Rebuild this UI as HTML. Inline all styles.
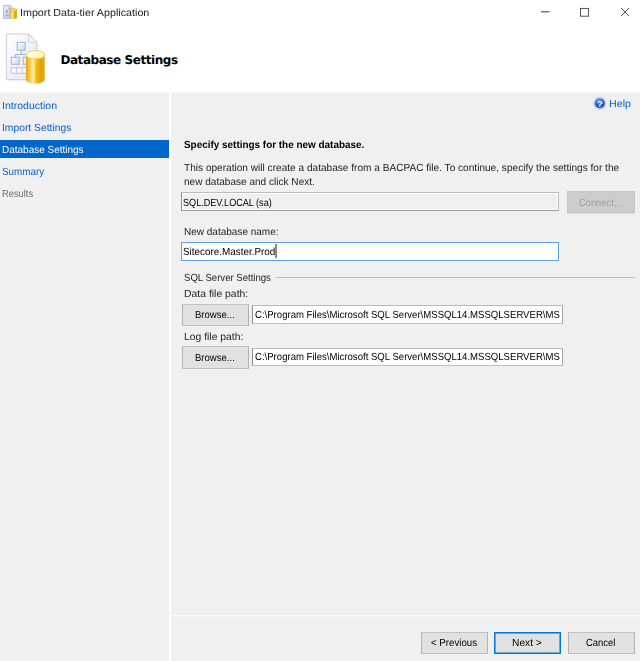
<!DOCTYPE html>
<html><head><meta charset="utf-8">
<title>Import Data-tier Application</title>
<style>
html,body{margin:0;padding:0;}
body{width:640px;height:661px;background:#fff;font-family:"Liberation Sans",sans-serif;font-size:11px;color:#000;position:relative;overflow:hidden;}
.abs{position:absolute;box-sizing:border-box;}
.tx{position:absolute;white-space:nowrap;transform-origin:0 0;text-rendering:geometricPrecision;}
#left{left:0;top:92px;width:169px;height:569px;background:#f0f0f0;border-top:1px solid #f8f8f8;}
#right{left:171px;top:92px;width:469px;height:569px;background:#f0f0f0;border-top:1px solid #f8f8f8;}
#sel{left:0;top:140px;width:169px;height:18px;background:#0066cc;}
#hsep{left:171px;top:615px;width:469px;height:2px;background:linear-gradient(#fbfbfb 50%,#f5f5f5 50%);}
.inp{background:#fff;border:1px solid;border-color:#bababa #a6a6a6 #c0c0c0 #8e8e8e;}
.ro{background:#f0f0f0;border:1px solid;border-color:#bdbdbd #c0c0c0 #9f9f9f #8c8c8c;box-shadow:inset 0 0 0 1px #fff;}
.btn{background:#e1e1e1;border:1px solid;border-color:#bebebe #b2b2b2;}
#gline{left:276px;top:277px;width:359px;height:1px;background:#bdbdbd;}
</style></head><body>
<div class="abs" id="left"></div>
<div class="abs" id="right"></div>
<div class="abs" id="hsep"></div>
<div class="abs" id="sel"></div>

<!-- window controls -->
<svg class="abs" style="left:520px;top:0" width="120" height="30" viewBox="0 0 120 30">
 <path d="M21 11.8H29.6" stroke="#3a3a3a" stroke-width="1" fill="none"/>
 <rect x="60.5" y="8.4" width="8.1" height="7.8" stroke="#444" stroke-width="0.9" fill="none"/>
 <path d="M101 8L109 16.2M109 8L101 16.2" stroke="#3a3a3a" stroke-width="0.9" fill="none"/>
</svg>

<!-- fields -->
<div class="abs ro" style="left:181px;top:192px;width:378px;height:19px"></div>
<div class="abs" style="left:567px;top:191px;width:68px;height:22px;background:#cccccc;border:1px solid #c6c6c6;box-shadow:0 1px 0 #dfdfdf"></div>
<div class="abs inp" style="left:181px;top:242px;width:378px;height:19px;border-color:#5ba3e1"></div>
<div class="abs" style="left:275px;top:244px;width:2px;height:14px;background:#8a8a8a"></div>
<div class="abs" id="gline"></div>
<div class="abs btn" style="left:182px;top:304px;width:67px;height:22px"></div>
<div class="abs inp" style="left:252px;top:305px;width:311px;height:19px"></div>
<div class="abs btn" style="left:182px;top:346px;width:67px;height:23px"></div>
<div class="abs inp" style="left:252px;top:348px;width:311px;height:18px"></div>

<div class="abs btn" style="left:421px;top:632px;width:67px;height:22px"></div>
<div class="abs btn" style="left:494px;top:632px;width:67px;height:22px;border:1px solid #0078d7;box-shadow:inset 0 0 0 1px rgba(0,120,215,.55)"></div>
<div class="abs btn" style="left:568px;top:632px;width:67px;height:22px"></div>

<!-- big wizard icon -->
<svg class="abs" style="left:0;top:26px" width="60" height="66" viewBox="0 26 60 66">
 <defs>
  <linearGradient id="docg" x1="0" y1="0" x2="1" y2="1"><stop offset="0" stop-color="#ffffff"/><stop offset="1" stop-color="#e6e6e6"/></linearGradient>
  <linearGradient id="boxg" x1="0" y1="0" x2="1" y2="1"><stop offset="0" stop-color="#ffffff"/><stop offset="1" stop-color="#c9d6f2"/></linearGradient>
  <linearGradient id="cylg" x1="0" y1="0" x2="1" y2="0">
   <stop offset="0" stop-color="#e9a616"/><stop offset="0.18" stop-color="#f2c441"/><stop offset="0.38" stop-color="#fff2a6"/><stop offset="0.56" stop-color="#f1b91c"/><stop offset="0.85" stop-color="#e0a000"/><stop offset="1" stop-color="#ebb434"/>
  </linearGradient>
  <linearGradient id="topg" x1="0" y1="0" x2="1" y2="1"><stop offset="0" stop-color="#fffef0"/><stop offset="1" stop-color="#fff3b4"/></linearGradient>
  <filter id="sh" x="-20%" y="-20%" width="140%" height="140%"><feGaussianBlur stdDeviation="0.8"/></filter>
 </defs>
 <path d="M7 34.5H28.5L36.8 43V80H7Z" fill="#000" opacity="0.18" filter="url(#sh)"/>
 <path d="M6.5 34H28.5L36.5 42.3V79.5H6.5Z" fill="url(#docg)" stroke="#d3d3d3" stroke-width="1"/>
 <path d="M28.5 34V42.3H36.5Z" fill="#f4f4f4" stroke="#cfcfcf" stroke-width="0.8"/>
 <g stroke="#a0b2da" stroke-width="1" fill="url(#boxg)">
  <path d="M21.3 50.5V54.5M15.3 57V54.5H27.3V57" fill="none" stroke="#9db3de"/>
  <rect x="17.2" y="42.3" width="8" height="8"/>
  <rect x="11.2" y="57.3" width="8" height="7"/>
  <rect x="23.2" y="57.3" width="8" height="7"/>
  <rect x="11.2" y="67.8" width="16.5" height="5.5" stroke="#b9c5e0" fill="#fbfcff"/>
  <path d="M16.7 67.8V73.3M22.2 67.8V73.3" stroke="#b9c5e0" fill="none"/>
 </g>
 <ellipse cx="35.5" cy="80.3" rx="9.6" ry="3.6" fill="#000" opacity="0.15" filter="url(#sh)"/>
 <path d="M25.9 54.8V79.2A9.45 4.1 0 0 0 44.8 79.2V54.8Z" fill="url(#cylg)"/>
 <ellipse cx="35.35" cy="54.8" rx="9.45" ry="4.2" fill="url(#topg)" stroke="#f0c54a" stroke-width="0.8"/>
</svg>

<!-- title icon -->
<svg class="abs" style="left:0;top:0" width="22" height="24" viewBox="0 0 22 24">
 <defs>
  <linearGradient id="tdoc" x1="0" y1="0" x2="1" y2="1"><stop offset="0" stop-color="#eef1f8"/><stop offset="1" stop-color="#b7c3dc"/></linearGradient>
 </defs>
 <path d="M3.5 5.5H10.8L13.8 8.5V18.5H3.5Z" fill="url(#tdoc)" stroke="#b3bfd8" stroke-width="1"/>
 <path d="M10.8 5.5V8.5H13.8" fill="#e9edf6" stroke="#b3bfd8" stroke-width="0.7"/>
 <path d="M5.6 10h2.4v2.6h-2.4zM8.6 7.4h2v2h-2zM5.4 14.4h3.4v1.8h-3.4z" fill="#8fa3c9" opacity="0.8"/>
 <path d="M9.7 10V17.2A3.7 1.5 0 0 0 17.1 17.2V10Z" fill="url(#cylg)"/>
 <ellipse cx="13.4" cy="10" rx="3.7" ry="1.4" fill="#f5d364" stroke="#e9b534" stroke-width="0.5"/>
</svg>

<!-- help icon -->
<svg class="abs" style="left:590px;top:94px" width="20" height="20" viewBox="590 94 20 20">
 <defs>
  <radialGradient id="hg" cx="0.4" cy="0.3" r="0.75"><stop offset="0" stop-color="#6aa2ff"/><stop offset="0.55" stop-color="#1f5fe0"/><stop offset="1" stop-color="#0b3aa8"/></radialGradient>
 </defs>
 <circle cx="599.8" cy="103.3" r="6.4" fill="#b4c1e2"/>
 <circle cx="599.8" cy="103.3" r="5.6" fill="#d6def2"/>
 <circle cx="599.8" cy="103.3" r="4.9" fill="url(#hg)"/>
 <text x="599.9" y="106.7" text-anchor="middle" font-family="Liberation Sans, sans-serif" font-weight="bold" font-size="9.5" fill="#fff">?</text>
</svg>

<div class="tx" id="title" style="left:20.10px;top:6px;font:normal 10.3px/16px 'Liberation Sans',sans-serif;color:#1a1a1a;transform:scaleX(1.0413)">Import Data-tier Application</div>
<div class="tx" id="hdr" style="left:60.40px;top:52px;font:bold 12px/16px 'DejaVu Sans',sans-serif;color:#000;letter-spacing:-0.434px">Database Settings</div>
<div class="tx" id="n1" style="left:2.40px;top:99px;font:normal 10.3px/16px 'Liberation Sans',sans-serif;color:#075fca;transform:scaleX(1.0225)">Introduction</div>
<div class="tx" id="n2" style="left:2.40px;top:121px;font:normal 10.3px/16px 'Liberation Sans',sans-serif;color:#075fca;transform:scaleX(1.0015)">Import Settings</div>
<div class="tx" id="n3" style="left:2.40px;top:143px;font:normal 10.3px/16px 'Liberation Sans',sans-serif;color:#fff;transform:scaleX(0.9691)">Database Settings</div>
<div class="tx" id="n4" style="left:2.40px;top:165px;font:normal 10.3px/16px 'Liberation Sans',sans-serif;color:#075fca;transform:scaleX(0.9576)">Summary</div>
<div class="tx" id="n5" style="left:2.40px;top:187px;font:normal 10.3px/16px 'Liberation Sans',sans-serif;color:#6d6d6d;transform:scaleX(0.9068)">Results</div>
<div class="tx" id="help" style="left:609.30px;top:97px;font:normal 10.3px/16px 'Liberation Sans',sans-serif;color:#075fca;transform:scaleX(1.0396)">Help</div>
<div class="tx" id="spec" style="left:184.00px;top:138px;font:bold 10.3px/16px 'Liberation Sans',sans-serif;color:#000;transform:scaleX(0.9634)">Specify settings for the new database.</div>
<div class="tx" id="p1" style="left:184.40px;top:161px;font:normal 10.3px/16px 'Liberation Sans',sans-serif;color:#1e1e1e;transform:scaleX(0.9806)">This operation will create a database from a BACPAC file. To continue, specify the settings for the</div>
<div class="tx" id="p2" style="left:184.40px;top:175px;font:normal 10.3px/16px 'Liberation Sans',sans-serif;color:#1e1e1e;transform:scaleX(0.9769)">new database and click Next.</div>
<div class="tx" id="srv" style="left:183.40px;top:196px;font:normal 10.3px/16px 'Liberation Sans',sans-serif;color:#000;transform:scaleX(0.8827)">SQL.DEV.LOCAL (sa)</div>
<div class="tx" id="conn" style="left:579.00px;top:196px;font:normal 10.3px/16px 'Liberation Sans',sans-serif;color:#a0a0a0;transform:scaleX(0.9062)">Connect...</div>
<div class="tx" id="ndn" style="left:184.40px;top:225px;font:normal 10.3px/16px 'Liberation Sans',sans-serif;color:#1e1e1e;transform:scaleX(0.9715)">New database name:</div>
<div class="tx" id="dbn" style="left:183.40px;top:245px;font:normal 10.3px/16px 'Liberation Sans',sans-serif;color:#000;transform:scaleX(0.9604)">Sitecore.Master.Prod</div>
<div class="tx" id="sss" style="left:184.40px;top:271px;font:normal 10.3px/16px 'Liberation Sans',sans-serif;color:#1e1e1e;transform:scaleX(0.9295)">SQL Server Settings</div>
<div class="tx" id="dfp" style="left:184.40px;top:287px;font:normal 10.3px/16px 'Liberation Sans',sans-serif;color:#1e1e1e;transform:scaleX(1.0108)">Data file path:</div>
<div class="tx" id="b1" style="left:195.10px;top:308px;font:normal 10.3px/16px 'Liberation Sans',sans-serif;color:#000;transform:scaleX(0.9273)">Browse...</div>
<div class="tx" id="path1" style="left:254.70px;top:308px;font:normal 10.3px/16px 'Liberation Sans',sans-serif;color:#000;transform:scaleX(0.9297)">C:\Program Files\Microsoft SQL Server\MSSQL14.MSSQLSERVER\MS</div>
<div class="tx" id="lfp" style="left:184.40px;top:330px;font:normal 10.3px/16px 'Liberation Sans',sans-serif;color:#1e1e1e;transform:scaleX(1.0068)">Log file path:</div>
<div class="tx" id="b2" style="left:195.10px;top:351px;font:normal 10.3px/16px 'Liberation Sans',sans-serif;color:#000;transform:scaleX(0.9273)">Browse...</div>
<div class="tx" id="path2" style="left:254.70px;top:350px;font:normal 10.3px/16px 'Liberation Sans',sans-serif;color:#000;transform:scaleX(0.9297)">C:\Program Files\Microsoft SQL Server\MSSQL14.MSSQLSERVER\MS</div>
<div class="tx" id="prev" style="left:431.20px;top:636px;font:normal 10.3px/16px 'Liberation Sans',sans-serif;color:#000;transform:scaleX(0.9408)">&lt; Previous</div>
<div class="tx" id="next" style="left:512.20px;top:636px;font:normal 10.3px/16px 'Liberation Sans',sans-serif;color:#000;transform:scaleX(0.9922)">Next &gt;</div>
<div class="tx" id="cancel" style="left:585.60px;top:636px;font:normal 10.3px/16px 'Liberation Sans',sans-serif;color:#000;transform:scaleX(0.9177)">Cancel</div>
</body></html>
